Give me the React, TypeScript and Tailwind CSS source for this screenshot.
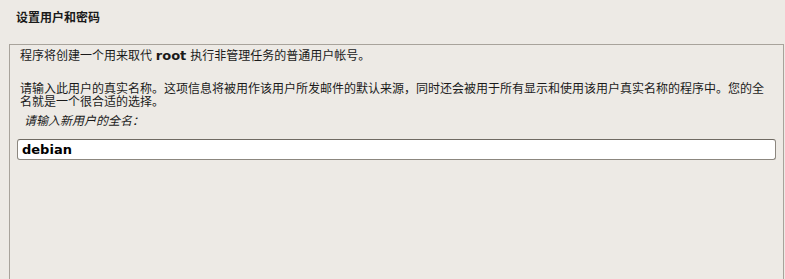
export default function App() {
  const cjk = { fontFamily: '"DejaVu Sans", "Noto Sans CJK SC", sans-serif' };

  return (
    <div
      className="w-[785px] h-[279px] overflow-hidden bg-[#edeae5] text-[#1a1a1a] flex flex-col"
      style={cjk}
    >
      <div className="pl-[16px] pt-[11px] h-[44px] text-[12px] leading-[14px] font-bold">
        设置用户和密码
      </div>

      <div className="ml-[9px] mr-[1px] flex-1 border-t border-l border-r border-[#a8a39b] pl-[7px] pr-[7px] pt-[4px]">
        <p className="pl-[3px] text-[12px] leading-[13px]">
          程序将创建一个用来取代 <b className="font-bold text-[13px]">root</b> 执行非管理任务的普通用户帐号。
        </p>

        <p className="mt-[20px] pl-[3px] w-[756px] text-[12px] leading-[13px]">
          请输入此用户的真实名称。这项信息将被用作该用户所发邮件的默认来源，同时还会被用于所有显示和使用该用户真实名称的程序中。您的全名就是一个很合适的选择。
        </p>

        <p className="mt-[6px] pl-[7px] text-[12px] leading-[13px] italic">
          请输入新用户的全名：
        </p>

        <div className="mt-[11px] h-[21px] w-[759px] rounded-[3px] border border-[#8c877f] border-t-[#6f6a62] bg-white flex items-center px-[4px]">
          <span className="text-[13px] font-bold leading-none text-black">debian</span>
        </div>
      </div>
    </div>
  );
}
